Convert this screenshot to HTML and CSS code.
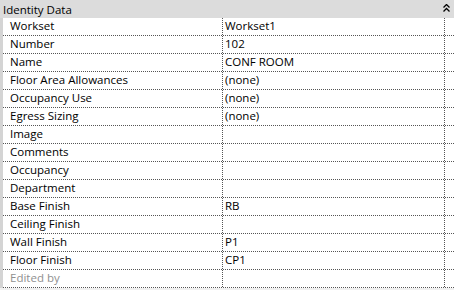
FILE: index.html
```html
<!DOCTYPE html>
<html>
<head>
<meta charset="utf-8">
<link rel="stylesheet" href="styles.css">
</head>
<body>
<div class="panel">
  <div class="header">
    <span class="title">Identity Data</span>
    <svg class="collapse" width="7" height="8" viewBox="0 0 7 8">
      <path d="M0.5 3.5 L3.5 0.5 L6.5 3.5 M0.5 7.5 L3.5 4.5 L6.5 7.5" fill="none" stroke="#000" stroke-width="1.3"/>
    </svg>
  </div>
  <div class="rows">
    <div class="row"><div class="label">Workset</div><div class="value">Workset1</div><div class="end"></div></div>
    <div class="row"><div class="label">Number</div><div class="value">102</div><div class="end"></div></div>
    <div class="row"><div class="label">Name</div><div class="value">CONF ROOM</div><div class="end"></div></div>
    <div class="row"><div class="label">Floor Area Allowances</div><div class="value">(none)</div><div class="end"></div></div>
    <div class="row"><div class="label">Occupancy Use</div><div class="value">(none)</div><div class="end"></div></div>
    <div class="row"><div class="label">Egress Sizing</div><div class="value">(none)</div><div class="end"></div></div>
    <div class="row"><div class="label">Image</div><div class="value"></div><div class="end"></div></div>
    <div class="row"><div class="label">Comments</div><div class="value"></div><div class="end"></div></div>
    <div class="row"><div class="label">Occupancy</div><div class="value"></div><div class="end"></div></div>
    <div class="row"><div class="label">Department</div><div class="value"></div><div class="end"></div></div>
    <div class="row"><div class="label">Base Finish</div><div class="value">RB</div><div class="end"></div></div>
    <div class="row"><div class="label">Ceiling Finish</div><div class="value"></div><div class="end"></div></div>
    <div class="row"><div class="label">Wall Finish</div><div class="value">P1</div><div class="end"></div></div>
    <div class="row"><div class="label">Floor Finish</div><div class="value">CP1</div><div class="end"></div></div>
    <div class="row"><div class="label disabled">Edited by</div><div class="value"></div><div class="end"></div></div>
  </div>
</div>
</body>
</html>
```
FILE: styles.css
```css
html, body {
  margin: 0;
  padding: 0;
  background: #f0f0f0;
}
.panel {
  width: 454px;
  height: 290px;
  background: #f0f0f0;
  font-family: "Open Sans", "DejaVu Sans", sans-serif;
  font-size: 11.5px;
  color: #000;
  overflow: hidden;
}
.header {
  height: 18px;
  background: #dcdcdc;
  display: flex;
  align-items: center;
  justify-content: space-between;
  padding: 0 4px 0 3px;
  box-sizing: border-box;
}
.title {
  font-size: 11.5px;
  line-height: 17px;
}
.collapse {
  display: block;
  margin-top: -2px;
}
.rows {
  border-left: 3px solid #d4d4d4;
  background: #fff;
}
.row {
  display: grid;
  grid-template-columns: 220px 222px 9px;
  height: 18px;
  box-sizing: border-box;
  border-bottom: 1px dotted #555;
}
.label {
  padding-left: 7px;
  line-height: 16px;
  border-right: 1px dotted #555;
  white-space: nowrap;
}
.value {
  padding-left: 2px;
  line-height: 16px;
  border-right: 1px dotted #555;
  white-space: nowrap;
}
.disabled {
  color: #909090;
}
```
